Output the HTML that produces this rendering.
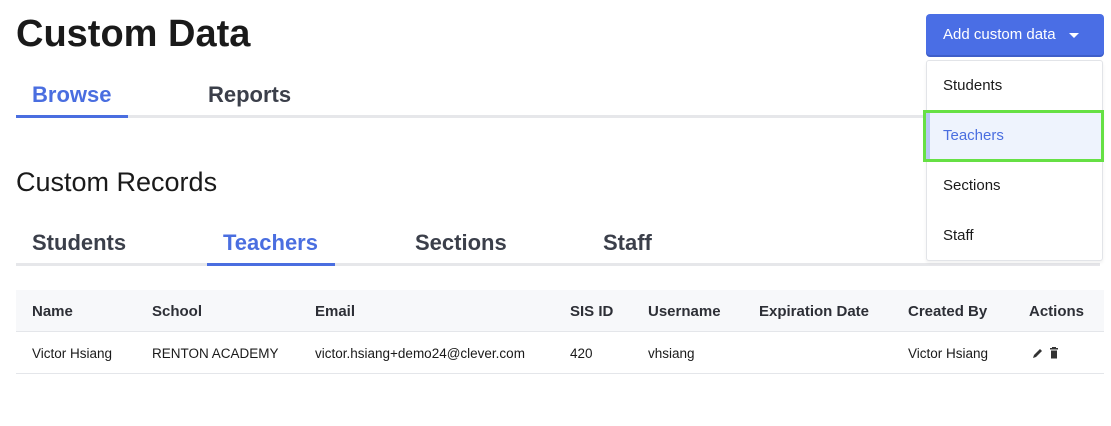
<!DOCTYPE html>
<html><head><meta charset="utf-8"><style>
*{margin:0;padding:0;box-sizing:border-box}
body{width:1111px;height:426px;background:#fff;font-family:"Liberation Sans",sans-serif;color:#1a1a1a;position:relative;overflow:hidden}
.a{position:absolute;white-space:nowrap}
h1{position:absolute;left:16px;top:13px;font-size:38px;font-weight:bold;color:#1a1a1a}
.tab{position:absolute;font-size:22px;font-weight:bold;color:#3b3f4a}
.blue{color:#4a6ee0}
.line{position:absolute;height:3px;background:#e6e7ea}
.ul{position:absolute;height:3px;background:#4a6ee0}
.th{position:absolute;top:303px;font-size:15px;font-weight:bold;color:#2d2f36}
.td{position:absolute;top:346px;font-size:13.5px;color:#1a1a1a}
</style></head><body>
<h1>Custom Data</h1>
<div class="tab blue" style="left:32px;top:82px">Browse</div>
<div class="tab" style="left:208px;top:82px">Reports</div>
<div class="line" style="left:16px;top:115px;width:1084px"></div>
<div class="ul" style="left:16px;top:115px;width:112px"></div>
<div class="a" style="left:16px;top:167px;font-size:27px;color:#1a1a1a">Custom Records</div>
<div class="tab" style="left:32px;top:230px">Students</div>
<div class="tab blue" style="left:223px;top:230px">Teachers</div>
<div class="tab" style="left:415px;top:230px">Sections</div>
<div class="tab" style="left:603px;top:230px">Staff</div>
<div class="line" style="left:16px;top:263px;width:1084px"></div>
<div class="ul" style="left:207px;top:263px;width:128px"></div>
<div class="a" style="left:16px;top:290px;width:1088px;height:42px;background:#f7f8fa;border-bottom:1px solid #e4e6ea"></div>
<div class="a" style="left:16px;top:373px;width:1088px;height:1px;background:#e4e6ea"></div>
<div class="th" style="left:32px">Name</div>
<div class="th" style="left:152px">School</div>
<div class="th" style="left:315px">Email</div>
<div class="th" style="left:570px">SIS ID</div>
<div class="th" style="left:648px">Username</div>
<div class="th" style="left:759px">Expiration Date</div>
<div class="th" style="left:908px">Created By</div>
<div class="th" style="left:1029px">Actions</div>
<div class="td" style="left:32px">Victor Hsiang</div>
<div class="td" style="left:152px">RENTON ACADEMY</div>
<div class="td" style="left:315px">victor.hsiang+demo24@clever.com</div>
<div class="td" style="left:570px">420</div>
<div class="td" style="left:648px">vhsiang</div>
<div class="td" style="left:908px">Victor Hsiang</div>
<svg class="a" style="left:1031px;top:346px" width="34" height="14" viewBox="0 0 34 14">
<path d="M2 12 L3 9 L9 3 L11 5 L5 11 Z" fill="#333"/>
<rect x="19" y="2" width="8" height="1.5" fill="#333"/><rect x="21" y="1" width="4" height="1.5" fill="#333"/>
<rect x="20" y="4.5" width="6" height="8" fill="#333"/>
</svg>
<div class="a" style="left:926px;top:14px;width:178px;height:41px;background:#4a6ee5;border-radius:4px;box-shadow:0 2px 0 #3e5ec9;color:#fff;font-size:15px;line-height:42px;padding-left:17px">Add custom data <span style="display:inline-block;margin-left:9px;border-left:5px solid transparent;border-right:5px solid transparent;border-top:5px solid #fff;vertical-align:middle"></span></div>
<div class="a" style="left:926px;top:60px;width:177px;height:201px;background:#fff;border:1px solid #e2e4e8;border-radius:3px;box-shadow:0 2px 3px rgba(0,0,0,.06)"></div>
<div class="a" style="left:943px;top:77px;font-size:15px">Students</div>
<div class="a" style="left:923px;top:110px;width:181px;height:52px;background:#eef3fd;border:3px solid #66e044"></div>
<div class="a" style="left:926px;top:113px;width:4px;height:46px;background:#b8c8f4"></div>
<div class="a" style="left:943px;top:127px;font-size:15px;color:#4a6ee0">Teachers</div>
<div class="a" style="left:943px;top:177px;font-size:15px">Sections</div>
<div class="a" style="left:943px;top:227px;font-size:15px">Staff</div>
</body></html>
